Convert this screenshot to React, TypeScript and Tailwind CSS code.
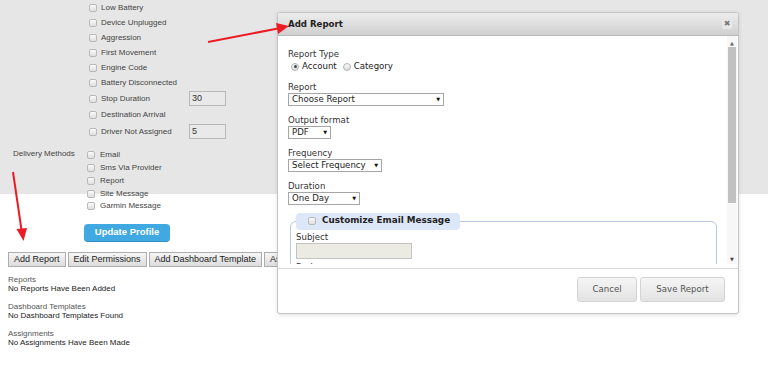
import React from "react";

const alertRows = [
  { label: "Low Battery", h: "h-[15px]" },
  { label: "Device Unplugged", h: "h-[15px]" },
  { label: "Aggression", h: "h-[15px]" },
  { label: "First Movement", h: "h-[15px]" },
  { label: "Engine Code", h: "h-[15px]" },
  { label: "Battery Disconnected", h: "h-[15px]" },
  { label: "Stop Duration", h: "h-[17px]", value: "30" },
  { label: "Destination Arrival", h: "h-[16px]" },
  { label: "Driver Not Assigned", h: "h-[17px]", value: "5" },
];

const deliveryRows = ["Email", "Sms Via Provider", "Report", "Site Message", "Garmin Message"];

const sections = [
  { title: "Reports", text: "No Reports Have Been Added" },
  { title: "Dashboard Templates", text: "No Dashboard Templates Found" },
  { title: "Assignments", text: "No Assignments Have Been Made" },
];

function Box() {
  return (
    <span className="block h-[8px] w-[8px] shrink-0 rounded-[2px] border border-[#b9b9b9] bg-[linear-gradient(#fbfbfb,#dedede)]" />
  );
}

function FakeSelect({ text, w }: { text: string; w: string }) {
  return (
    <div
      className={`flex h-[13px] items-center justify-between border border-[#a6a6a6] bg-white pl-[3px] pr-[3px] text-[8.6px] leading-none text-[#222] ${w}`}
    >
      <span>{text}</span>
      <span className="text-[5px] leading-none text-[#111]">▼</span>
    </div>
  );
}

function Field({ label, children }: { label: string; children: React.ReactNode }) {
  return (
    <div className="mb-[9px]">
      <div className="text-[8.6px] leading-[11px] text-[#333]">{label}</div>
      {children}
    </div>
  );
}

function Radio({ checked }: { checked?: boolean }) {
  return (
    <span className="flex h-[8px] w-[8px] items-center justify-center rounded-full border border-[#b3b3b3] bg-[linear-gradient(#fafafa,#dcdcdc)]">
      {checked ? <span className="h-[3px] w-[3px] rounded-full bg-[#444]" /> : null}
    </span>
  );
}

function AddReportModal() {
  return (
    <div className="absolute left-[277px] top-[12px] flex h-[302px] w-[462px] flex-col rounded-[3px] border border-[#c4c4c4] bg-white shadow-[0_1px_4px_rgba(0,0,0,0.12)] [font-family:'DejaVu_Sans',Verdana,sans-serif]">
      <div className="flex h-[23px] shrink-0 items-center justify-between rounded-t-[2px] border-b border-[#b9b9b9] bg-[linear-gradient(#ededed,#cfcfcf)] pl-[10px] pr-[6px]">
        <span className="text-[8.6px] font-bold text-[#222]">Add Report</span>
        <span className="flex h-[9px] w-[10px] items-center justify-center rounded-[2px] bg-[#e9e9e9] text-[8px] leading-none text-[#7a7a7a]">
          ✖
        </span>
      </div>

      <div className="mb-[4px] flex min-h-0 flex-1">
        <div className="min-w-0 flex-1 overflow-hidden pl-[10px] pt-[12.5px]">
          <div className="text-[8.6px] leading-[11px] text-[#333]">Report Type</div>
          <div className="mb-[8px] flex h-[14px] items-center text-[8.6px] text-[#222]">
            <span className="ml-[3px]">
              <Radio checked />
            </span>
            <span className="ml-[3px]">Account</span>
            <span className="ml-[6px]">
              <Radio />
            </span>
            <span className="ml-[3px]">Category</span>
          </div>

          <Field label="Report">
            <FakeSelect text="Choose Report" w="w-[156px]" />
          </Field>
          <Field label="Output format">
            <FakeSelect text="PDF" w="w-[43px]" />
          </Field>
          <Field label="Frequency">
            <FakeSelect text="Select Frequency" w="w-[94px]" />
          </Field>
          <Field label="Duration">
            <FakeSelect text="One Day" w="w-[72px]" />
          </Field>

          <fieldset className="ml-[2px] mt-[-1px] w-[427px] rounded-t-[6px] border border-[#b7c7df] px-[5px] pb-[4px]">
            <legend className="flex h-[17px] items-center rounded-[4px] bg-[#dce8f8] pl-[12px] pr-[10px]">
              <Box />
              <span className="ml-[6px] text-[8.8px] font-bold text-[#222]">Customize Email Message</span>
            </legend>
            <div className="mt-[2px] text-[8.6px] leading-[11px] text-[#333]">Subject</div>
            <div className="h-[16px] w-[116px] border border-[#c3c3c3] bg-[#ebebe4]" />
            <div className="mt-[3px] text-[8.6px] leading-[11px] text-[#333]">Body</div>
            <div className="h-[60px]" />
          </fieldset>
        </div>

        <div className="mr-[1px] flex w-[10px] shrink-0 flex-col items-center bg-[#f7f7f7]">
          <span className="mt-[3px] h-[8px] text-[5px] leading-[8px] text-[#666]">▲</span>
          <div className="h-[156px] w-[8px] bg-[#c1c1c1]" />
          <div className="flex-1" />
          <span className="mb-[1px] h-[8px] text-[5px] leading-[8px] text-[#444]">▼</span>
        </div>
      </div>

      <div className="flex h-[45px] shrink-0 items-start justify-end gap-[3px] border-t border-[#d9d9d9] pr-[13px] pt-[8px]">
        <button className="h-[25px] w-[60px] rounded-[3px] border border-[#d3d3d3] bg-[linear-gradient(#f5f5f5,#e3e3e3)] text-[8.6px] text-[#555]">
          Cancel
        </button>
        <button className="h-[25px] w-[85px] rounded-[3px] border border-[#d3d3d3] bg-[linear-gradient(#f5f5f5,#e3e3e3)] text-[8.6px] text-[#555]">
          Save Report
        </button>
      </div>
    </div>
  );
}

export default function App() {
  return (
    <div className="relative h-[366px] w-[768px] overflow-hidden bg-[linear-gradient(#e6e6e6_194px,#ffffff_194px)] [font-family:'Liberation_Sans',Arial,sans-serif]">
      <div className="flex flex-col">
        {alertRows.map((r) => (
          <div key={r.label} className={`flex items-center pl-[89px] ${r.h}`}>
            <Box />
            <span className="ml-[4px] w-[88px] text-[8px] text-[#444]">{r.label}</span>
            {r.value ? (
              <div className="flex h-[15px] w-[37px] items-center border border-[#b8b8b8] bg-[#e9e9e9] pl-[2px] text-[9px] text-[#333]">
                {r.value}
              </div>
            ) : null}
          </div>
        ))}
      </div>

      <div className="mt-[9px] flex">
        <div className="w-[87px] pl-[13px] text-[8px] leading-[9px] text-[#444]">Delivery Methods</div>
        <div className="flex flex-col">
          {deliveryRows.map((d) => (
            <div key={d} className="flex h-[12.75px] items-center">
              <Box />
              <span className="ml-[5px] text-[8px] text-[#444]">{d}</span>
            </div>
          ))}
        </div>
      </div>

      <div className="ml-[84px] mt-[11px] flex">
        <button className="h-[18px] w-[86px] rounded-[4px] border-b border-[#2f8fc4] bg-[#40a9e2] text-[9.5px] font-bold text-white">
          Update Profile
        </button>
      </div>

      <div className="ml-[8px] mt-[10px] flex gap-[2px]">
        {["Add Report", "Edit Permissions", "Add Dashboard Template", "Assign Templates"].map((b) => (
          <button
            key={b}
            className="h-[15px] border border-[#adadad] bg-[linear-gradient(#f6f6f6,#dcdcdc)] px-[5px] text-[9px] leading-none text-[#222]"
          >
            {b}
          </button>
        ))}
      </div>

      <div className="ml-[8px] mt-[8px] flex flex-col gap-[9px]">
        {sections.map((s) => (
          <div key={s.title} className="text-[8px] leading-[9px]">
            <div className="text-[#555]">{s.title}</div>
            <div className="text-[#222]">{s.text}</div>
          </div>
        ))}
      </div>

      <AddReportModal />

      <svg className="pointer-events-none absolute left-0 top-0" width="768" height="366">
        <line x1="208" y1="42" x2="278" y2="28.5" stroke="#ec1c24" strokeWidth="2" />
        <polygon points="289,26 276,23 278,34" fill="#ec1c24" />
        <line x1="13" y1="172" x2="21.5" y2="230" stroke="#ec1c24" strokeWidth="2" />
        <polygon points="23.5,241 16.5,229 27,228" fill="#ec1c24" />
      </svg>
    </div>
  );
}
